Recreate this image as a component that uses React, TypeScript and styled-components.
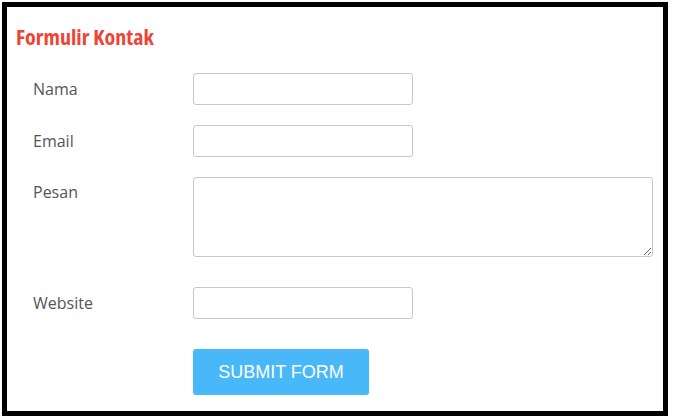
import React from "react";
import styled, { createGlobalStyle } from "styled-components";

const GlobalStyle = createGlobalStyle`
  html, body {
    margin: 0;
    padding: 0;
    background: #ffffff;
  }
  body {
    font-family: "Open Sans", "Liberation Sans", sans-serif;
  }
`;

const Page = styled.div`
  width: 673px;
  height: 419px;
  padding: 2px 5px 3px 2px;
  box-sizing: border-box;
`;

const Frame = styled.div`
  height: 100%;
  box-sizing: border-box;
  border: 5px solid #000000;
  background: #ffffff;
  padding: 14px 10px 0 9px;
`;

const Title = styled.h2`
  margin: 0 0 22px;
  font-family: "Open Sans", sans-serif;
  font-stretch: 75%;
  font-weight: 700;
  font-size: 22px;
  line-height: 30px;
  color: #ef4336;
`;

const Form = styled.form`
  display: flex;
  flex-direction: column;
  padding-left: 17px;
`;

const Row = styled.div<{ gap?: number; top?: boolean }>`
  display: grid;
  grid-template-columns: 160px 1fr;
  align-items: ${({ top }) => (top ? "start" : "center")};
  margin-bottom: ${({ gap }) => gap ?? 20}px;
`;

const Label = styled.label<{ offset?: number }>`
  font-family: "Open Sans", sans-serif;
  font-size: 16px;
  line-height: 20px;
  color: #555555;
  padding-top: ${({ offset }) => offset ?? 0}px;
`;

const Input = styled.input`
  width: 220px;
  height: 32px;
  box-sizing: border-box;
  border: 1px solid #c8c8c8;
  border-radius: 3px;
  padding: 4px 8px;
  font-size: 14px;
  font-family: "Open Sans", sans-serif;
  outline: none;
`;

const TextArea = styled.textarea`
  display: block;
  width: 460px;
  height: 80px;
  box-sizing: border-box;
  border: 1px solid #c8c8c8;
  border-radius: 3px;
  padding: 4px 8px;
  font-size: 14px;
  font-family: "Open Sans", sans-serif;
  outline: none;
`;

const SubmitButton = styled.button`
  width: 176px;
  height: 46px;
  border: none;
  border-radius: 3px;
  background: #48b8f9;
  color: #ffffff;
  font-family: "Liberation Sans", Arial, sans-serif;
  font-size: 18px;
  cursor: pointer;
`;

export default function App() {
  return (
    <>
      <GlobalStyle />
      <Page>
        <Frame>
          <Title>Formulir Kontak</Title>
          <Form onSubmit={(e) => e.preventDefault()}>
            <Row>
              <Label htmlFor="nama">Nama</Label>
              <Input id="nama" type="text" />
            </Row>
            <Row>
              <Label htmlFor="email">Email</Label>
              <Input id="email" type="email" />
            </Row>
            <Row top gap={30}>
              <Label htmlFor="pesan" offset={5}>
                Pesan
              </Label>
              <TextArea id="pesan" />
            </Row>
            <Row gap={30}>
              <Label htmlFor="website">Website</Label>
              <Input id="website" type="url" />
            </Row>
            <Row>
              <span />
              <div>
                <SubmitButton type="submit">SUBMIT FORM</SubmitButton>
              </div>
            </Row>
          </Form>
        </Frame>
      </Page>
    </>
  );
}
